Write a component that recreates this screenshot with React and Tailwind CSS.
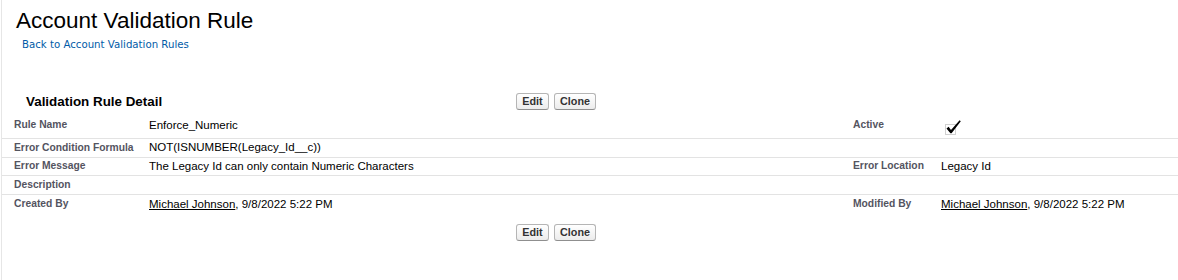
import React from 'react';

const rows = [
  { label: 'Rule Name', value: 'Enforce_Numeric', label2: 'Active', value2: 'check', h: 'h-[26px]' },
  { label: 'Error Condition Formula', value: 'NOT(ISNUMBER(Legacy_Id__c))', h: 'h-[19px]' },
  { label: 'Error Message', value: 'The Legacy Id can only contain Numeric Characters', label2: 'Error Location', value2: 'Legacy Id', h: 'h-[18px]' },
  { label: 'Description', value: '', h: 'h-[19px]' },
  { label: 'Created By', value: 'user', label2: 'Modified By', value2: 'user', h: 'h-[19px]', last: true },
];

const Check = () => (
  <svg width="17" height="16" viewBox="0 0 17 16" className="mt-[2px] ml-[4px]">
    <rect x="0.5" y="5.5" width="10" height="10" fill="none" stroke="#a0a0a0" strokeWidth="1" strokeDasharray="1 1" />
    <polygon points="1.5,9.5 3.6,7.8 6,11 14.6,1.2 15.8,2.3 6.6,14.2 5.4,14.2" fill="#000" />
  </svg>
);

const User = () => (
  <span>
    <span className="underline">Michael Johnson</span>, 9/8/2022 5:22 PM
  </span>
);

const renderValue = (v) => {
  if (v === 'check') return <Check />;
  if (v === 'user') return <User />;
  return v;
};

const Buttons = () => (
  <div className="flex gap-[5px]">
    <button className="w-[33px] h-[17px] rounded-[3px] border border-[#b5b5b5] border-b-[#8f8f8f] bg-gradient-to-b from-white to-[#ececec] text-[10.8px] font-bold text-[#333] leading-none">
      Edit
    </button>
    <button className="w-[42px] h-[17px] rounded-[3px] border border-[#b5b5b5] border-b-[#8f8f8f] bg-gradient-to-b from-white to-[#ececec] text-[10.8px] font-bold text-[#333] leading-none">
      Clone
    </button>
  </div>
);

export default function App() {
  return (
    <div className="w-full h-[280px] bg-white ml-px border-l border-[#e6e6e6] font-['Liberation_Sans',Arial,sans-serif] leading-none">
      <div className="pt-[8px] pl-[14px]">
        <h1 className="text-[22.5px] leading-[26px] font-normal text-black">Account Validation Rule</h1>
      </div>
      <div className="mt-[5px] pl-[20px] h-[12px]">
        <a href="#" className="block text-[10.2px] leading-[12px] text-[#015ba7] font-['DejaVu_Sans',Verdana,sans-serif]">
          Back to Account Validation Rules
        </a>
      </div>

      <div className="mt-[39px] grid grid-cols-[514px_auto] h-[23px] items-center">
        <h2 className="pl-[24px] text-[13.4px] font-bold text-black">Validation Rule Detail</h2>
        <Buttons />
      </div>

      <div>
        {rows.map((r) => (
          <div
            key={r.label}
            className={`flex items-center ${r.h} ${r.last ? '' : 'border-b border-[#e3e3e3]'}`}
          >
            <div className="w-[147px] pl-[12px] text-[10.3px] font-bold text-[#54545f]">{r.label}</div>
            <div className="w-[704px] text-[11.5px] text-black">{renderValue(r.value)}</div>
            <div className="w-[88px] text-[10.3px] font-bold text-[#54545f]">{r.label2}</div>
            <div className="flex-1 text-[11.5px] text-black">{r.value2 ? renderValue(r.value2) : null}</div>
          </div>
        ))}
      </div>

      <div className="mt-[10px] grid grid-cols-[514px_auto]">
        <div />
        <Buttons />
      </div>
    </div>
  );
}
